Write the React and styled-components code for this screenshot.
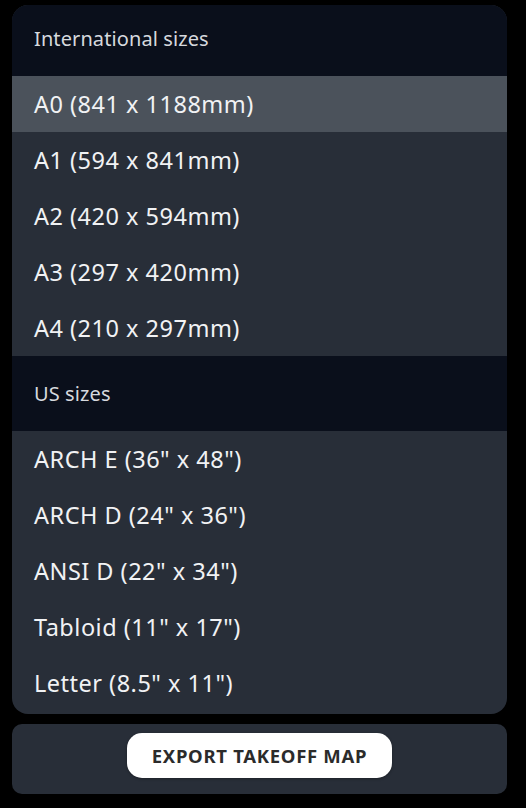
import React from 'react';
import styled, { createGlobalStyle } from 'styled-components';

const GlobalStyle = createGlobalStyle`
	html, body {
		margin: 0;
		padding: 0;
		background: #000;
	}
	body {
		font-family: 'Noto Sans', 'Open Sans', sans-serif;
	}
`;

const groups = [
	{
		title: 'International sizes',
		top: true,
		items: [
			'A0 (841 x 1188mm)',
			'A1 (594 x 841mm)',
			'A2 (420 x 594mm)',
			'A3 (297 x 420mm)',
			'A4 (210 x 297mm)'
		]
	},
	{
		title: 'US sizes',
		items: [
			'ARCH E (36" x 48")',
			'ARCH D (24" x 36")',
			'ANSI D (22" x 34")',
			'Tabloid (11" x 17")',
			'Letter (8.5" x 11")'
		]
	}
];

const App = () => {
	const selected = 'A0 (841 x 1188mm)';

	return (
		<Page>
			<GlobalStyle />
			<Panel>
				{groups.map(group => (
					<React.Fragment key={group.title}>
						<GroupHeader top={group.top}>{group.title}</GroupHeader>
						{group.items.map(item => (
							<Option key={item} active={item === selected}>
								{item}
							</Option>
						))}
					</React.Fragment>
				))}
			</Panel>
			<Footer>
				<ExportButton type="button">Export takeoff map</ExportButton>
			</Footer>
		</Page>
	);
};

export default App;

const Page = styled.div`
	width: 526px;
	height: 808px;
	box-sizing: border-box;
	padding: 5px 19px 0 12px;
	display: flex;
	flex-direction: column;
	gap: 10px;
`;

const Panel = styled.div`
	background: #282e38;
	border-radius: 16px;
	overflow: hidden;
	display: flex;
	flex-direction: column;
	padding-bottom: 3px;
`;

const GroupHeader = styled.div`
	background: #0a0f1b;
	color: #d6d9de;
	font-size: 20px;
	letter-spacing: 0.1px;
	height: ${p => (p.top ? '71px' : '75px')};
	display: flex;
	align-items: center;
	padding: 0 22px;
	padding-bottom: ${p => (p.top ? '4px' : '0')};
	box-sizing: border-box;
`;

const Option = styled.div`
	height: 56px;
	display: flex;
	align-items: center;
	padding: 0 22px;
	font-size: 23.5px;
	letter-spacing: 0.5px;
	color: #f1f2f4;
	background: ${p => (p.active ? '#4b525b' : 'transparent')};
	cursor: pointer;
`;

const Footer = styled.div`
	background: #282e38;
	border-radius: 10px;
	height: 70px;
	box-sizing: border-box;
	padding-bottom: 7px;
	display: flex;
	align-items: center;
	justify-content: center;
`;

const ExportButton = styled.button`
	background: #fff;
	color: #2b2b2b;
	border: none;
	border-radius: 15px;
	width: 265px;
	height: 45px;
	padding: 0;
	font-family: 'Noto Sans', sans-serif;
	font-weight: 700;
	font-size: 18.5px;
	letter-spacing: 0.7px;
	text-transform: uppercase;
	box-shadow: 0 1px 3px rgba(0, 0, 0, 0.3);
	cursor: pointer;
`;
